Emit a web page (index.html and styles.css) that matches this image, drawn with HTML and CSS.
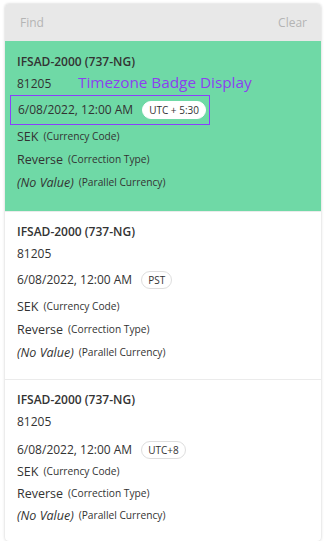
FILE: index.html
```html
<!DOCTYPE html>
<html>
<head>
<meta charset="utf-8">
<link rel="stylesheet" href="styles.css">
</head>
<body>
<div class="panel">
  <div class="search">
    <span class="find">Find</span>
    <span class="clear">Clear</span>
  </div>
  <div class="card selected">
    <div class="row title">IFSAD-2000 (737-NG)</div>
    <div class="row">81205</div>
    <div class="row date highlight">6/08/2022, 12:00 AM <span class="badge filled">UTC + 5:30</span></div>
    <div class="row item"><span class="val">SEK</span><span class="lbl">(Currency Code)</span></div>
    <div class="row item"><span class="val">Reverse</span><span class="lbl">(Correction Type)</span></div>
    <div class="row item"><span class="val empty">(No Value)</span><span class="lbl">(Parallel Currency)</span></div>
    <div class="annotation">Timezone Badge Display</div>
  </div>
  <div class="card">
    <div class="row title">IFSAD-2000 (737-NG)</div>
    <div class="row">81205</div>
    <div class="row date">6/08/2022, 12:00 AM <span class="badge">PST</span></div>
    <div class="row item"><span class="val">SEK</span><span class="lbl">(Currency Code)</span></div>
    <div class="row item"><span class="val">Reverse</span><span class="lbl">(Correction Type)</span></div>
    <div class="row item"><span class="val empty">(No Value)</span><span class="lbl">(Parallel Currency)</span></div>
  </div>
  <div class="card last">
    <div class="row title">IFSAD-2000 (737-NG)</div>
    <div class="row">81205</div>
    <div class="row date">6/08/2022, 12:00 AM <span class="badge">UTC+8</span></div>
    <div class="row"><span class="val">SEK</span><span class="lbl">(Currency Code)</span></div>
    <div class="row"><span class="val">Reverse</span><span class="lbl">(Correction Type)</span></div>
    <div class="row"><span class="val empty">(No Value)</span><span class="lbl">(Parallel Currency)</span></div>
  </div>
</div>
</body>
</html>
```

FILE: styles.css
```css
html, body {
  margin: 0;
  padding: 0;
  background: #ffffff;
}
body {
  font-family: "Open Sans", "Noto Sans", sans-serif;
  color: #333333;
}
.panel {
  margin: 4px 5px 0 5px;
  width: 316px;
  border-radius: 4px;
  box-shadow: 0 0 3px rgba(0, 0, 0, 0.22);
  background: #ffffff;
  overflow: hidden;
}
.search {
  height: 37px;
  background: #e8e8e8;
  display: flex;
  align-items: center;
  justify-content: space-between;
  padding: 0 14px 0 15px;
  font-size: 12px;
  color: #b4b4b4;
}
.card {
  position: relative;
  padding: 9px 12px 15px 12px;
  border-bottom: 1px solid #ebebeb;
  display: flex;
  flex-direction: column;
}
.card.selected {
  background: #6fd9a6;
  padding-top: 10px;
  padding-bottom: 17px;
}
.card.last {
  border-bottom: none;
  padding-bottom: 14px;
}
.row {
  min-height: 22px;
  display: flex;
  align-items: center;
  font-size: 12px;
  line-height: 16px;
}
.row.item {
  min-height: 23px;
}
.row.title {
  font-weight: 600;
}
.row.date {
  min-height: 30px;
}
.card.last .row.date {
  min-height: 22px;
  padding-top: 6px;
}
.row.highlight {
  margin-left: -7px;
  padding-left: 7px;
  width: 191px;
  border: 1px solid #8a3ffc;
  min-height: 28px;
}
.val {
  font-size: 12.5px;
}
.val.empty {
  font-style: italic;
}
.lbl {
  font-size: 10.2px;
  margin-left: 5px;
  position: relative;
  top: -1px;
}
.badge {
  margin-left: 9px;
  font-size: 10px;
  line-height: 12px;
  padding: 2px 6px;
  border-radius: 9px;
  border: 1px solid #dedede;
  background: #ffffff;
  color: #333333;
}
.badge.filled {
  border-color: #ffffff;
}
.annotation {
  position: absolute;
  left: 73px;
  top: 31px;
  font-size: 15.3px;
  line-height: 20px;
  color: #8c3ff0;
}
```
